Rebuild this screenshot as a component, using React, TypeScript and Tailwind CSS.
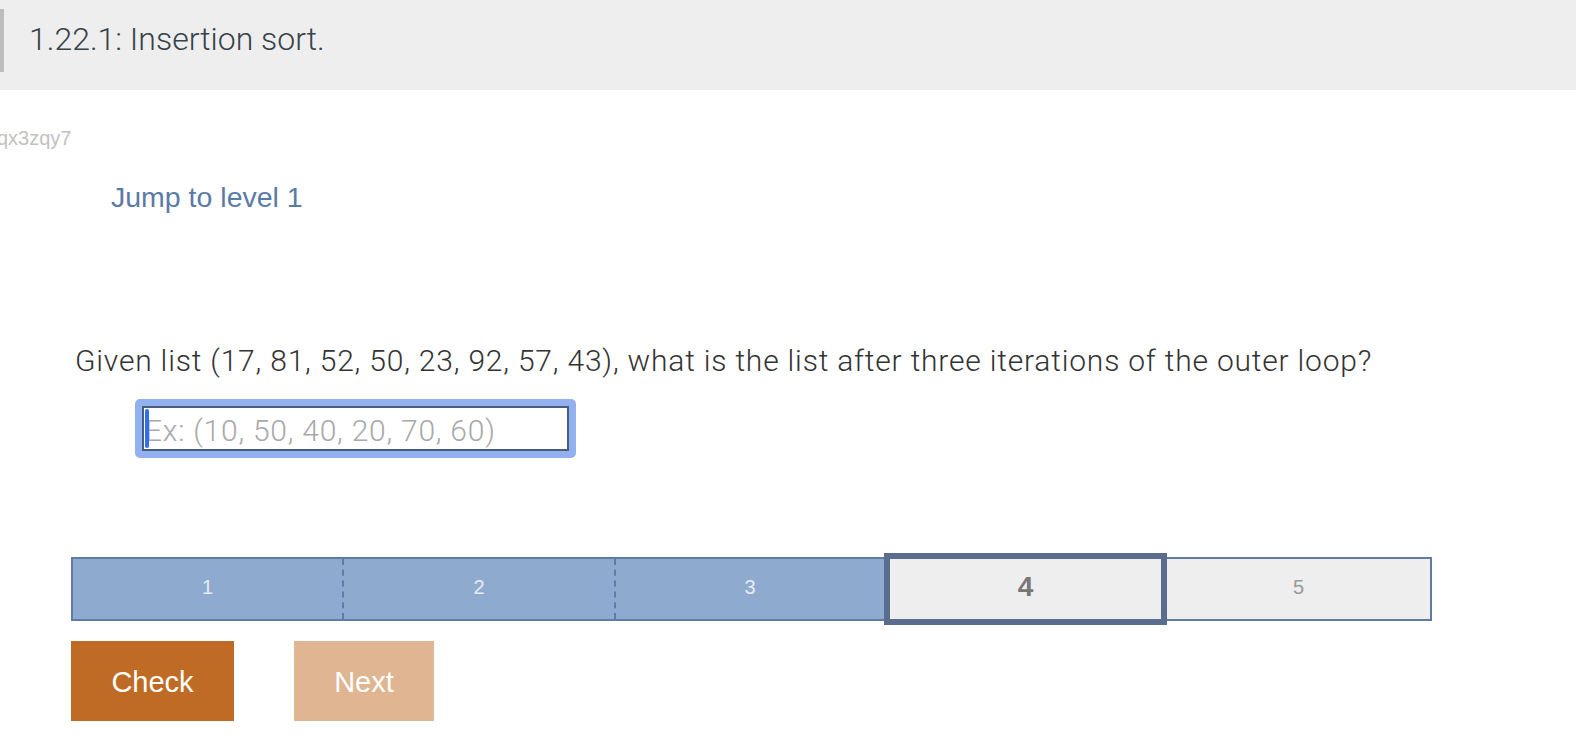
import React from 'react';

const steps = [
  { n: 1, done: true, w: 'w-[271px]', dash: true },
  { n: 2, done: true, w: 'w-[272px]', dash: true },
  { n: 3, done: true, w: 'w-[268px]', dash: false },
  { n: 4, done: false, w: 'w-[283px]', dash: false },
  { n: 5, done: false, w: 'flex-1', dash: false },
];

export default function App() {
  return (
    <div className="min-h-screen bg-white font-['Roboto',sans-serif]">
      {/* Header */}
      <div className="flex h-[90px] bg-[#eeeeee]">
        <div className="mt-[9px] h-[63px] w-[4px] bg-[#bdbdbd]" />
        <h1 className="ml-[25px] mt-[23px] text-[32px] font-light leading-none text-[#37424a]">
          1.22.1: Insertion sort.
        </h1>
      </div>

      <div className="-ml-[3px] mt-[38px] font-['Liberation_Sans',sans-serif] text-[20px] leading-none text-[#c2c2c2]">
        qx3zqy7
      </div>

      <div className="ml-[111px] mt-[35px] font-['Liberation_Sans',sans-serif] text-[28.5px] leading-none text-[#5b7ba5]">
        Jump to level 1
      </div>

      {/* Question */}
      <p className="ml-[75px] mt-[134px] text-[30px] font-light leading-none tracking-[0.8px] text-[#333333]">
        Given list (17, 81, 52, 50, 23, 92, 57, 43), what is the list after three iterations of the outer loop?
      </p>

      <div className="ml-[135px] mt-[23px] h-[59px] w-[441px] rounded-[5px] bg-[#93b1ee] p-[7px]">
        <div className="relative h-full w-full border-2 border-[#4a5d80] bg-white">
          <input
            type="text"
            placeholder="Ex: (10, 50, 40, 20, 70, 60)"
            className="h-full w-full bg-transparent pl-[1px] pt-[5px] text-[30px] font-light tracking-[0.75px] text-[#333] caret-transparent outline-none placeholder:text-[#a9a9a9]"
          />
          <span className="absolute left-[1px] top-[1px] h-[39px] w-[4px] rounded-[2px] bg-[#2f6ef0]" />
        </div>
      </div>

      {/* Level bar */}
      <div className="ml-[71px] mt-[99px] flex h-[64px] w-[1361px] border-2 border-[#5d7da5] font-['Liberation_Sans',sans-serif]">
        {steps.map((s) => {
          if (s.n === 4) {
            return (
              <div
                key={s.n}
                className={`-my-[6px] flex ${s.w} items-center justify-center border-[6px] border-[#5b6d8f] bg-[#eeeeee] pb-[4px] text-[28px] font-bold text-[#777777]`}
              >
                {s.n}
              </div>
            );
          }
          if (s.done) {
            return (
              <div
                key={s.n}
                className={`flex ${s.w} items-center justify-center bg-[#8eabcf] pb-[4px] text-[20px] text-[#e6ecf4] ${
                  s.dash ? 'border-r-2 border-dashed border-[#5d7da5]' : ''
                }`}
              >
                {s.n}
              </div>
            );
          }
          return (
            <div
              key={s.n}
              className={`flex ${s.w} items-center justify-center bg-[#eeeeee] pb-[4px] text-[20px] text-[#9a9a9a]`}
            >
              {s.n}
            </div>
          );
        })}
      </div>

      {/* Buttons */}
      <div className="ml-[71px] mt-[20px] flex gap-[60px] font-['Liberation_Sans',sans-serif]">
        <button className="h-[80px] w-[163px] bg-[#bf6b25] pt-[4px] text-[29px] text-white">Check</button>
        <button className="h-[80px] w-[140px] bg-[#dfb592] pt-[4px] text-[29px] text-white">Next</button>
      </div>
    </div>
  );
}
